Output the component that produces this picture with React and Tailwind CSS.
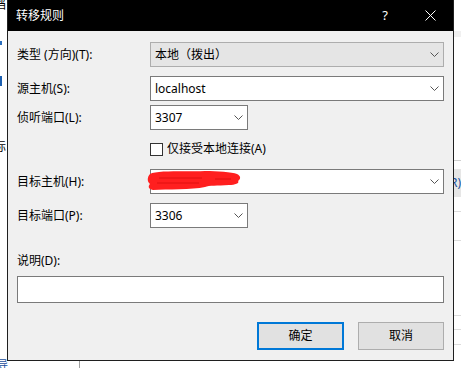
import React from 'react';

const font = { fontFamily: '"Noto Sans", "Noto Sans CJK SC", sans-serif' };

function Chevron() {
  return (
    <svg width="9" height="5" viewBox="0 0 9 5" className="shrink-0">
      <path d="M0.5 0.5 L4.5 4.5 L8.5 0.5" fill="none" stroke="#555" strokeWidth="1" />
    </svg>
  );
}

function Combo({ value, disabled, width = 'w-full', children }) {
  return (
    <div
      className={`${width} h-[25px] flex items-center border pl-[4px] pr-[4px] ${
        disabled ? 'bg-[#e5e5e5] border-[#adadad]' : 'bg-white border-[#7a7a7a]'
      }`}
    >
      <div className="flex-1 relative h-full flex items-center text-[12px] text-black leading-none">
        {value}
        {children}
      </div>
      <Chevron />
    </div>
  );
}

function Row({ label, mt, children }) {
  return (
    <div className={`flex items-center ${mt}`}>
      <div className="w-[133px] text-[12px] text-black leading-none">{label}</div>
      <div className="flex-1">{children}</div>
    </div>
  );
}

// red marker over the redacted host name
function Scribble() {
  return (
    <svg
      width="96"
      height="24"
      viewBox="0 0 96 24"
      className="absolute left-[-8px] top-[-1px]"
    >
      <path
        d="M3 5 C10 1 40 3 58 2 C70 2 85 3 90 5 C94 7 94 10 91 12 C93 14 88 16 82 16 C70 17 62 16 58 18 C45 21 20 20 6 21 C1 20 1 17 3 15 C0 13 0 8 3 5 Z"
        fill="#ff1f1f"
      />
      <path d="M12 9 L55 9 M10 14 L52 14 M68 10 L84 10" stroke="#e01010" strokeWidth="1" />
    </svg>
  );
}

export default function App() {
  return (
    <div className="w-[461px] h-[368px] relative overflow-hidden bg-white" style={font}>
      {/* desktop behind the dialog */}
      <div className="absolute left-[-6px] top-[-4px] text-[12px] text-black">档</div>
      <div className="absolute left-[0px] top-[41px] w-[2px] h-[4px] bg-[#2a6ebd]" />
      <div className="absolute left-[0px] top-[76px] w-[2px] h-[10px] bg-[#1c5fb0]" />
      <div className="absolute left-[-6px] top-[138px] text-[12px] text-black">际</div>
      <div className="absolute left-[-3px] top-[357px] text-[11px] text-[#1c4f9c]">导</div>
      <div className="absolute left-[79px] top-[361px] w-[1px] h-[7px] bg-[#a0a0a0]" />
      <div className="absolute left-[454px] top-[31px] w-[7px] h-[6px] bg-[#f0f0f0]" />
      <div className="absolute left-[454px] top-[160px] w-[7px] h-[1px] bg-[#d0d0d0]" />
      <div className="absolute left-[454px] top-[169px] w-[7px] h-[28px] bg-[#e6e6e6] text-[12px] leading-[28px] text-[#1c4f9c] overflow-hidden">
        <span className="ml-[-4px]">R)</span>
      </div>
      <div className="absolute left-[454px] top-[211px] w-[7px] h-[1px] bg-[#dcdcdc]" />
      <div className="absolute left-[454px] top-[240px] w-[7px] h-[1px] bg-[#dcdcdc]" />
      <div className="absolute left-[454px] top-[315px] w-[7px] h-[1px] bg-[#dcdcdc]" />
      <div className="absolute left-[454px] top-[329px] w-[7px] h-[1px] bg-[#dcdcdc]" />
      <div className="absolute left-[454px] top-[344px] w-[7px] h-[1px] bg-[#dcdcdc]" />

      {/* dialog window */}
      <div className="absolute left-[7px] top-0 w-[447px] h-[361px] border border-[#1f1f1f] border-t-0 bg-[#f0f0f0] flex flex-col">
        <div className="h-[31px] bg-black flex items-center pl-[8px] shrink-0">
          <span className="text-[12px] text-white leading-none">转移规则</span>
          <span className="ml-auto mr-[37px] text-[13px] text-white leading-none">?</span>
          <svg width="11" height="11" viewBox="0 0 11 11" className="mr-[17px]">
            <path d="M0.5 0.5 L10.5 10.5 M10.5 0.5 L0.5 10.5" stroke="#fff" strokeWidth="1" />
          </svg>
        </div>

        <div className="flex-1 flex flex-col pl-[9px] pr-[9px] pt-[11px]">
          <Row label="类型 (方向)(T):" mt="mt-0">
            <Combo value="本地（拨出）" disabled />
          </Row>
          <Row label="源主机(S):" mt="mt-[9px]">
            <Combo value="localhost" />
          </Row>
          <Row label="侦听端口(L):" mt="mt-[4px]">
            <Combo value="3307" width="w-[98px]" />
          </Row>
          <div className="flex items-center mt-[12px] ml-[133px] h-[14px]">
            <div className="w-[13px] h-[13px] border border-[#333] bg-white" />
            <span className="ml-[4px] text-[12px] text-black leading-none">仅接受本地连接(A)</span>
          </div>
          <Row label="目标主机(H):" mt="mt-[13px]">
            <Combo value="">
              <Scribble />
            </Combo>
          </Row>
          <Row label="目标端口(P):" mt="mt-[9px]">
            <Combo value="3306" width="w-[98px]" />
          </Row>
          <div className="mt-[27px] text-[12px] text-black leading-none">说明(D):</div>
          <div className="mt-[9px] h-[27px] bg-white border border-[#7a7a7a]" />
          <div className="flex justify-end gap-[14px] mt-[19px]">
            <button className="w-[87px] h-[28px] bg-[#e1e1e1] border-2 border-[#0078d7] text-[12px] text-black">
              确定
            </button>
            <button className="w-[86px] h-[28px] bg-[#e1e1e1] border border-[#adadad] text-[12px] text-black">
              取消
            </button>
          </div>
        </div>
      </div>
    </div>
  );
}
